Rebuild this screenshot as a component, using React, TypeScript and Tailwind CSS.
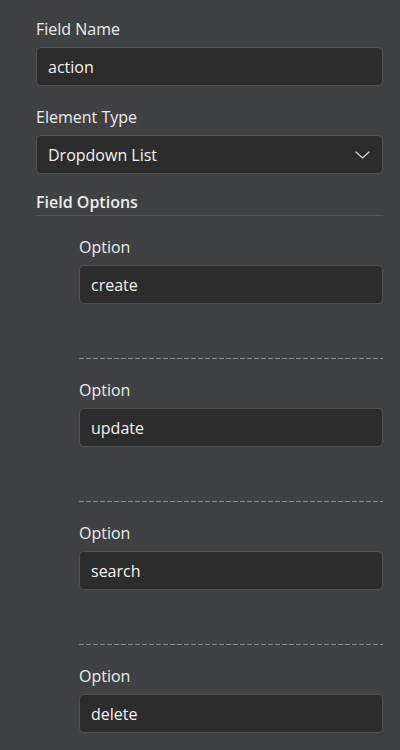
import React from "react";

const font = { fontFamily: '"Open Sans", "Noto Sans", sans-serif' };

function Field({ label, value }: { label: string; value: string }) {
  return (
    <div className="flex flex-col gap-[6px]">
      <div className="text-[16px] leading-[24px] text-[#ececec]">{label}</div>
      <div className="h-[39px] rounded-[5px] border border-[#4f5052] bg-[#2c2c2c] px-[11px] flex items-center text-[16px] text-[#f2f2f2]">
        {value}
      </div>
    </div>
  );
}

function Dashed() {
  return (
    <div className="h-px w-full bg-[repeating-linear-gradient(to_right,#8c8c8c_0px,#8c8c8c_5px,transparent_5px,transparent_7px)]" />
  );
}

export default function App() {
  const options = ["create", "update", "search", "delete"];
  return (
    <div className="w-[400px] h-[750px] overflow-hidden bg-[#404143] pl-[36px] pr-[17px] pt-[17px]" style={font}>
      <Field label="Field Name" value="action" />
      <div className="mt-[19px] flex flex-col gap-[6px]">
        <div className="text-[16px] leading-[24px] text-[#ececec]">Element Type</div>
        <div className="h-[39px] rounded-[5px] border border-[#4f5052] bg-[#2c2c2c] pl-[11px] pr-[12px] flex items-center justify-between text-[16px] text-[#f2f2f2]">
          <span>Dropdown List</span>
          <svg width="15" height="8" viewBox="0 0 15 8" fill="none">
            <path d="M0.7 0.7 L7.5 7 L14.3 0.7" stroke="#d8d8d8" strokeWidth="1.2" />
          </svg>
        </div>
      </div>
      <div className="mt-[16px] text-[16px] leading-[24px] font-semibold text-[#ececec] pb-px border-b border-[#555658]">
        Field Options
      </div>
      <div className="pl-[43px] pt-[19px] flex flex-col">
        {options.map((o, i) => (
          <div key={o} className="flex flex-col">
            {i > 0 && (
              <div className="mt-[54px] mb-[19px]">
                <Dashed />
              </div>
            )}
            <Field label="Option" value={o} />
          </div>
        ))}
      </div>
    </div>
  );
}
